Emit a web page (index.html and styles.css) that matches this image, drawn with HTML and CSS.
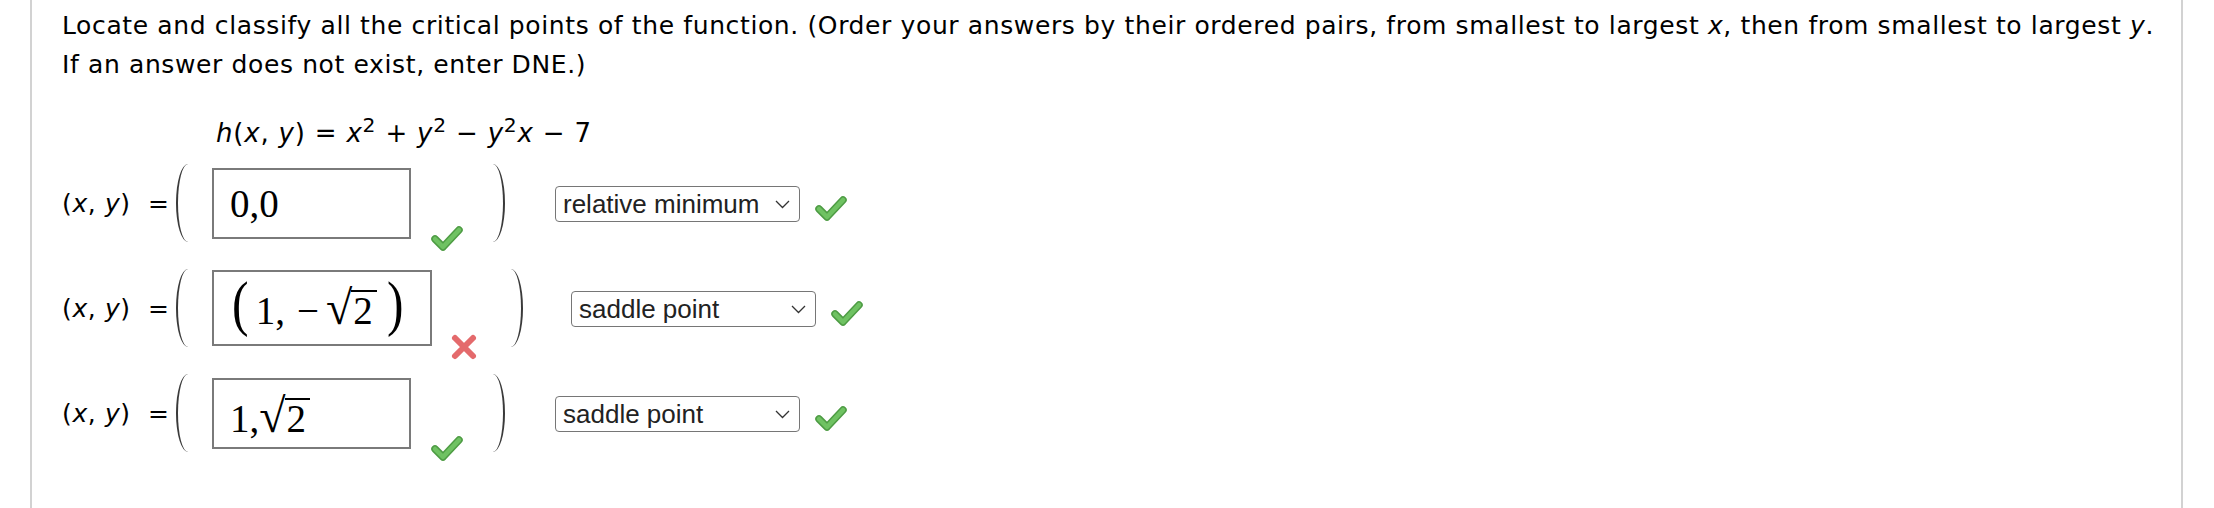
FILE: index.html
```html
<!DOCTYPE html>
<html>
<head>
<meta charset="utf-8">
<link rel="stylesheet" href="styles.css">
</head>
<body>
<div class="card">
  <p class="prompt">Locate and classify all the critical points of the function. (Order your answers by their ordered pairs, from smallest to largest <i>x</i>, then from smallest to largest <i>y</i>.<br>If an answer does not exist, enter DNE.)</p>
  <div class="equation"><i>h</i>(<i>x</i>, <i>y</i>) = <i>x</i><sup>2</sup> + <i>y</i><sup>2</sup> − <i>y</i><sup>2</sup><i>x</i> − 7</div>
  <div class="rows">
    <div class="row">
      <span class="label">(<i>x</i>, <i>y</i>)</span>
      <span class="equals">=</span>
      <span class="paren open"></span>
      <span class="box"><span class="math">0,0</span></span>
      <span class="mark check-mark">
        <svg width="32" height="27" viewBox="0 0 32 27"><path d="M4 14 L12 22 L28 5" fill="none" stroke="#4e9c44" stroke-width="7.5" stroke-linejoin="round" stroke-linecap="round"/><path d="M4 14 L12 22 L28 5" fill="none" stroke="#6fc262" stroke-width="4.5" stroke-linejoin="round" stroke-linecap="round"/></svg>
      </span>
      <span class="paren close"></span>
      <span class="select">relative minimum<svg class="chev" width="15" height="9" viewBox="0 0 15 9"><polyline points="1,1 7.5,7.5 14,1" fill="none" stroke="#333" stroke-width="1.3"/></svg></span>
      <span class="side-mark">
        <svg width="32" height="27" viewBox="0 0 32 27"><path d="M4 14 L12 22 L28 5" fill="none" stroke="#4e9c44" stroke-width="7.5" stroke-linejoin="round" stroke-linecap="round"/><path d="M4 14 L12 22 L28 5" fill="none" stroke="#6fc262" stroke-width="4.5" stroke-linejoin="round" stroke-linecap="round"/></svg>
      </span>
    </div>
    <div class="row row-wide">
      <span class="label">(<i>x</i>, <i>y</i>)</span>
      <span class="equals">=</span>
      <span class="paren open"></span>
      <span class="box box-wide"><span class="math"><span class="bigp lp">(</span>1,<span class="minus">−</span><span class="sqrt"><span class="rad">√</span><span class="radicand">2</span></span><span class="bigp rp">)</span></span></span>
      <span class="mark x-mark">
        <svg width="28" height="28" viewBox="0 0 28 28"><path d="M5 5 L23 23 M23 5 L5 23" fill="none" stroke="#e46a6c" stroke-width="6" stroke-linecap="round"/></svg>
      </span>
      <span class="paren close"></span>
      <span class="select">saddle point<svg class="chev" width="15" height="9" viewBox="0 0 15 9"><polyline points="1,1 7.5,7.5 14,1" fill="none" stroke="#333" stroke-width="1.3"/></svg></span>
      <span class="side-mark">
        <svg width="32" height="27" viewBox="0 0 32 27"><path d="M4 14 L12 22 L28 5" fill="none" stroke="#4e9c44" stroke-width="7.5" stroke-linejoin="round" stroke-linecap="round"/><path d="M4 14 L12 22 L28 5" fill="none" stroke="#6fc262" stroke-width="4.5" stroke-linejoin="round" stroke-linecap="round"/></svg>
      </span>
    </div>
    <div class="row">
      <span class="label">(<i>x</i>, <i>y</i>)</span>
      <span class="equals">=</span>
      <span class="paren open"></span>
      <span class="box box-sqrt"><span class="math">1,<span class="sqrt"><span class="rad">√</span><span class="radicand">2</span></span></span></span>
      <span class="mark check-mark">
        <svg width="32" height="27" viewBox="0 0 32 27"><path d="M4 14 L12 22 L28 5" fill="none" stroke="#4e9c44" stroke-width="7.5" stroke-linejoin="round" stroke-linecap="round"/><path d="M4 14 L12 22 L28 5" fill="none" stroke="#6fc262" stroke-width="4.5" stroke-linejoin="round" stroke-linecap="round"/></svg>
      </span>
      <span class="paren close"></span>
      <span class="select">saddle point<svg class="chev" width="15" height="9" viewBox="0 0 15 9"><polyline points="1,1 7.5,7.5 14,1" fill="none" stroke="#333" stroke-width="1.3"/></svg></span>
      <span class="side-mark">
        <svg width="32" height="27" viewBox="0 0 32 27"><path d="M4 14 L12 22 L28 5" fill="none" stroke="#4e9c44" stroke-width="7.5" stroke-linejoin="round" stroke-linecap="round"/><path d="M4 14 L12 22 L28 5" fill="none" stroke="#6fc262" stroke-width="4.5" stroke-linejoin="round" stroke-linecap="round"/></svg>
      </span>
    </div>
  </div>
</div>
</body>
</html>
```
FILE: styles.css
```css
html, body {
  margin: 0;
  padding: 0;
  background: #fff;
}
body {
  font-family: "DejaVu Sans", Verdana, sans-serif;
  font-size: 25px;
  letter-spacing: 0.62px;
  color: #000;
}
.card {
  box-sizing: border-box;
  margin-left: 30px;
  width: 2153px;
  height: 508px;
  border-left: 2px solid #d2d2d2;
  border-right: 2px solid #d2d2d2;
  padding-left: 30px;
}
.prompt {
  margin: 0;
  padding-top: 6px;
  line-height: 39px;
}
.equation {
  margin-left: 154px;
  margin-top: 32px;
  font-size: 26px;
  letter-spacing: 0.8px;
  line-height: 34px;
  white-space: nowrap;
}
.equation sup {
  font-size: 0.78em;
  vertical-align: 0.48em;
  line-height: 0;
}
.rows {
  display: flex;
  flex-direction: column;
  gap: 27px;
  margin-top: 14px;
}
.row {
  display: flex;
  align-items: center;
  height: 78px;
}
.label {
  white-space: nowrap;
  width: 86px;
}
.equals {
  width: 20px;
  margin-right: 8px;
}
.paren {
  box-sizing: border-box;
  width: 12px;
  height: 78px;
  border: 0 solid #3a3a3a;
}
.paren.open {
  border-left-width: 2.5px;
  border-radius: 100% 0 0 100% / 50% 0 0 50%;
  margin-right: 24px;
}
.paren.close {
  border-right-width: 2.5px;
  border-radius: 0 100% 100% 0 / 0 50% 50% 0;
}
.box {
  box-sizing: border-box;
  width: 199px;
  height: 71px;
  border: 2px solid #7a7a7a;
  padding-left: 16px;
  display: flex;
  align-items: center;
  font-family: "Liberation Serif", "DejaVu Serif", serif;
  font-size: 39px;
  letter-spacing: 0;
  white-space: nowrap;
}
.box-wide {
  width: 220px;
  height: 76px;
}
.box-sqrt {
  padding-top: 6px;
}
.math {
  display: block;
}
.bigp {
  display: inline-block;
  font-size: 62px;
  line-height: 0;
  transform: scaleX(0.8);
}
.lp {
  margin-right: 5px;
}
.rp {
  margin-left: 8px;
}
.minus {
  margin: 0 7px 0 12px;
}
.sqrt {
  display: inline-flex;
  align-items: flex-start;
}
.rad {
  font-size: 48px;
  line-height: 1;
}
.radicand {
  border-top: 2px solid #000;
  line-height: 38px;
  padding: 0 4px 0 2px;
  margin-top: 6px;
  margin-left: -1px;
}
.mark {
  align-self: flex-end;
  display: flex;
}
.check-mark {
  margin-left: 20px;
  margin-right: 30px;
  margin-bottom: -10px;
}
.x-mark {
  margin-left: 18px;
  margin-right: 33px;
  margin-bottom: -14px;
}
.select {
  box-sizing: border-box;
  display: flex;
  align-items: center;
  justify-content: space-between;
  width: 245px;
  height: 36px;
  margin-left: 50px;
  margin-top: 2px;
  padding: 0 9px 0 7px;
  border: 1.5px solid #767676;
  border-radius: 4px;
  font-family: "Liberation Sans", Arial, sans-serif;
  font-size: 26px;
  letter-spacing: 0;
  color: #222;
  white-space: nowrap;
}
.row-wide .select {
  margin-left: 48px;
}
.side-mark {
  display: flex;
  margin-left: 15px;
  margin-top: 10px;
}
```
